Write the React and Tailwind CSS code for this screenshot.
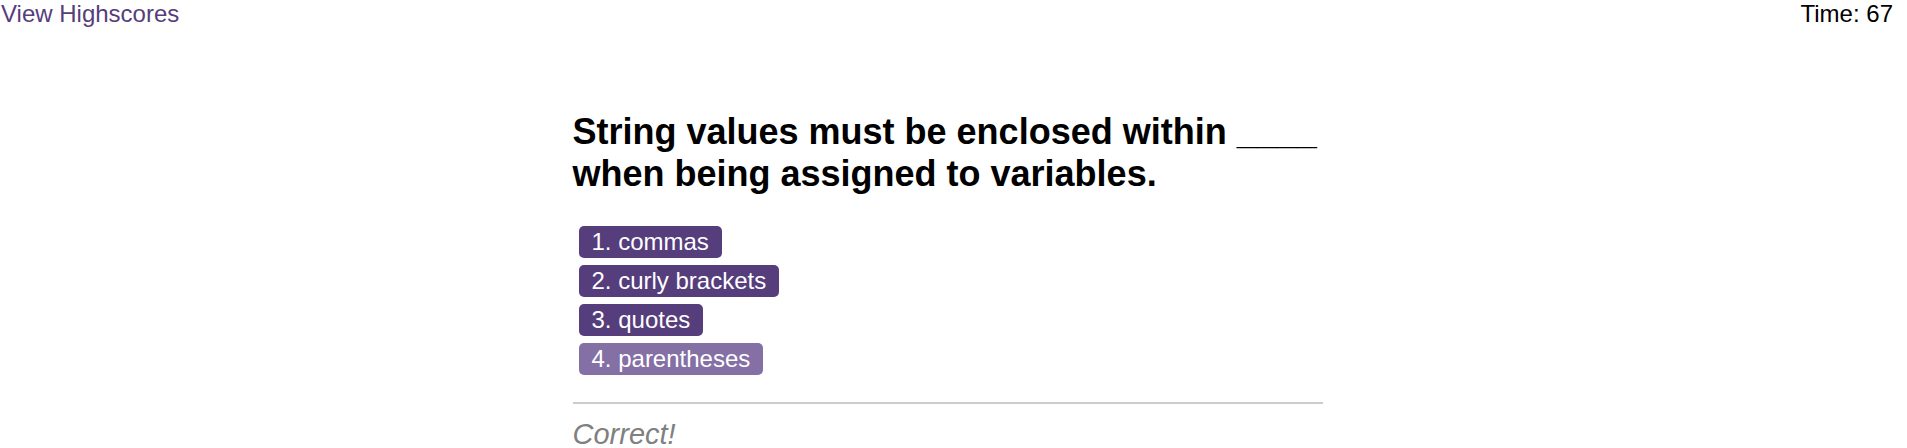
import React from 'react';

const choices = ['1. commas', '2. curly brackets', '3. quotes', '4. parentheses'];

export default function App() {
  return (
    <div className="min-h-screen bg-white text-black font-['Liberation_Sans',Arial,sans-serif]">
      {/* top bar */}
      <header className="flex items-start justify-between">
        <a href="#" className="text-[24px] leading-[28px] text-[#563d7c] pl-[1px]">
          View Highscores
        </a>
        <div className="text-[24px] leading-[28px] pr-[14px]">Time: 67</div>
      </header>

      {/* quiz card */}
      <main className="mx-auto w-[762px] pr-[12px] pt-[83px]">
        <h1 className="text-[36px] font-bold leading-[42px]">
          String values must be enclosed within ____ when being assigned to variables.
        </h1>

        <div className="mt-[31px] ml-[6px] flex flex-col items-start gap-[7px]">
          {choices.map((c, i) => (
            <button
              key={c}
              className={`rounded-[5px] px-[13px] h-[32px] text-[24px] leading-[28px] text-white ${
                i === 3 ? 'bg-[#8470a5]' : 'bg-[#563d7c]'
              }`}
            >
              {c}
            </button>
          ))}
        </div>

        <div className="mt-[27px] border-t-2 border-[#cccccc]" />
        <p className="mt-[13px] text-[29px] italic leading-[34px] text-[#808080]">Correct!</p>
      </main>
    </div>
  );
}
